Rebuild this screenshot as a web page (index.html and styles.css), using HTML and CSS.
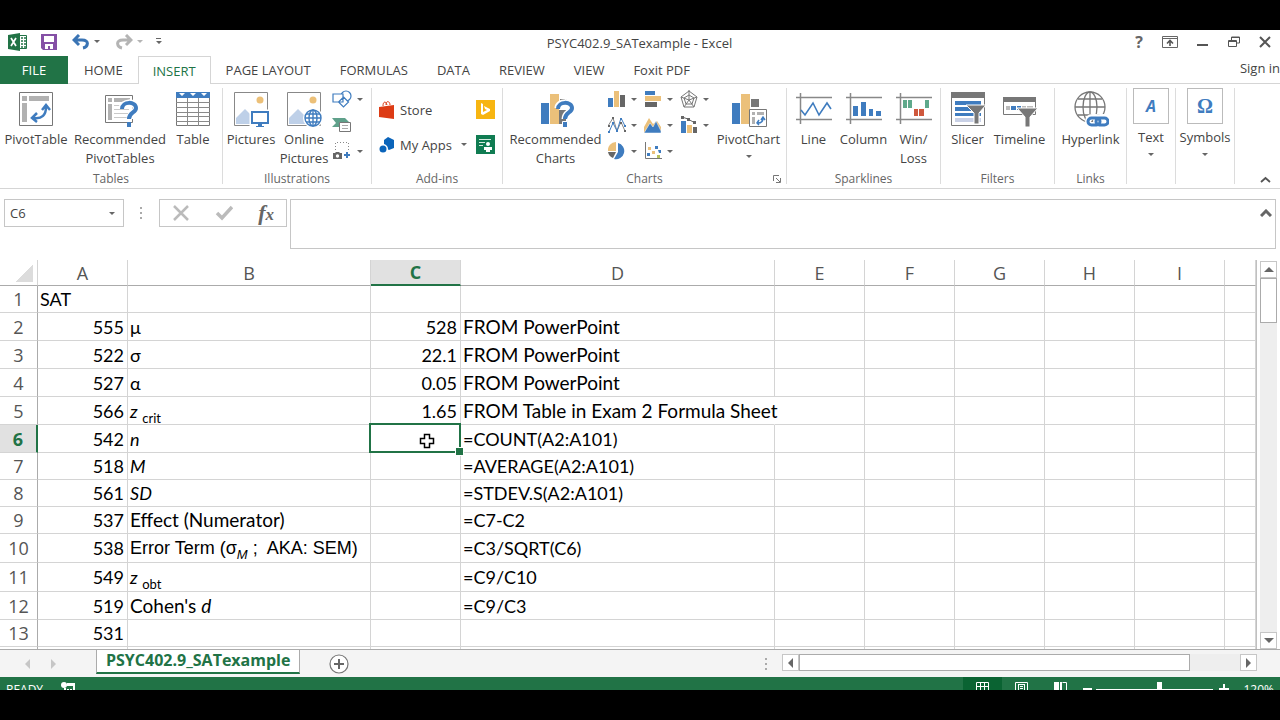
FILE: index.html
```html
<!DOCTYPE html>
<html lang="en">
<head>
    <meta charset="UTF-8">
    <meta name="viewport" content="width=device-width, initial-scale=1.0">
    <title>PSYC402.9_SATexample - Excel</title>
    <link rel="stylesheet" href="styles.css">
</head>
<body>
<div class="app">

    <!-- Title bar -->
    <header class="titlebar">
        <div class="quick">
            <svg class="logo" width="20" height="18" viewBox="0 0 20 18"><path fill="#217346" d="M0 2 12 0v18L0 16z"/><path fill="#fff" stroke="#217346" d="M12 2.500h6.500v13H12"/><path stroke="#217346" stroke-width="1.500" d="M13 5h2m1 0h2m-5 3h2m1 0h2m-5 3h2m1 0h2m-5 3h2m1 0h2"/><path stroke="#fff" stroke-width="1.700" d="m3 5 5 8m0-8-5 8"/></svg>
            <button aria-label="Save"><svg width="16" height="16" viewBox="0 0 16 16"><path fill="#8550a6" d="M0 0h16v16H2l-2-2z"/><path fill="#fff" d="M3 2h10v6H3zM4 10h8v5H9v-3H7v3H4z"/></svg></button>
            <button aria-label="Undo" class="undo"><svg width="18" height="16" viewBox="0 0 18 16"><path fill="none" stroke="#3a74b4" stroke-width="3" d="M3 6h7c8 0 6 7 1 8M7 1 2 6l5 5"/></svg><i class="caret"></i></button>
            <button aria-label="Redo" class="redo"><svg width="18" height="16" viewBox="0 0 18 16"><path fill="none" stroke="#b4b4b4" stroke-width="3" d="M15 6H8C0 6 2 13 7 14M11 1l5 5-5 5"/></svg><i class="caret"></i></button>
            <button aria-label="Customize Quick Access Toolbar" class="customize"><svg width="6" height="7" viewBox="0 0 6 7"><path fill="#666" d="M0 0h5v1H0zM0 3h6L3 6z"/></svg></button>
        </div>
        <div class="doc-title">PSYC402.9_SATexample - Excel</div>
        <div class="window-buttons">
            <button aria-label="Help" class="help">?</button>
            <button aria-label="Ribbon Display Options"><svg width="16" height="12" viewBox="0 0 16 12"><path fill="none" stroke="#666" d="M.5.5h15v11H.5zM0 2.500h16"/><path fill="none" stroke="#555" stroke-width="1.600" d="M8 10V5M5 7.500l3-3 3 3"/></svg></button>
            <button aria-label="Minimize"><svg width="12" height="12" viewBox="0 0 12 12"><path fill="#555" d="M0 8h11v2H0z"/></svg></button>
            <button aria-label="Restore"><svg width="12" height="12" viewBox="0 0 12 12"><path fill="none" stroke="#555" d="M3.500 4V1h8v6H9M.5 4.500h8v6h-8z"/><path stroke="#555" d="M3 1.500h9M0 5.500h9"/></svg></button>
            <button aria-label="Close"><svg width="12" height="12" viewBox="0 0 12 12"><path stroke="#555" stroke-width="2" d="m1 1 10 10M11 1 1 11"/></svg></button>
        </div>
    </header>

    <!-- Ribbon tabs -->
    <nav class="tabs">
        <button class="tab file">FILE</button>
        <button class="tab">HOME</button>
        <button class="tab active">INSERT</button>
        <button class="tab">PAGE LAYOUT</button>
        <button class="tab">FORMULAS</button>
        <button class="tab">DATA</button>
        <button class="tab">REVIEW</button>
        <button class="tab">VIEW</button>
        <button class="tab">Foxit PDF</button>
        <a class="sign-in" href="#">Sign in</a>
    </nav>

    <!-- Ribbon -->
    <div class="ribbon">
        <section class="group tables">
            <div class="tools">
                <button class="big w72"><svg width="36" height="36" viewBox="0 0 36 36"><path fill="#fff" stroke="#777" d="M1.500 1.500h33v33h-33z"/><path fill="#b1b1b1" d="M4 5h5v5H4zm7 0h20v5H11zM4 12h5v19H4z"/><path fill="none" stroke="#3f7cbf" stroke-width="2.500" d="M16 27c8 1 12-3 12-11M24 19l4-5 4 5M19 22l-5 5 5 4"/></svg>PivotTable</button>
                <button class="big w96"><svg width="36" height="36" viewBox="0 0 36 36"><path fill="#fff" stroke="#777" d="M3.500 4.500h27v27h-27z"/><path fill="#b1b1b1" d="M6 7h4v4H6zm6 0h16v4H12zM6 13h4v16H6z"/><path stroke="#c9c9c9" d="M12 14.500h15m-15 4h15m-15 4h15m-15 4h15"/><path fill="none" stroke="#fff" stroke-width="7" d="M20 18c0-8 14-8 14-1 0 5-6 4-6 11"/><path fill="none" stroke="#3f7cbf" stroke-width="4" d="M20 18c0-8 14-8 14-1 0 5-7 4-7 11"/><path fill="#3f7cbf" d="M25 31h4v5h-4z"/></svg>Recommended<br>PivotTables</button>
                <button class="big w50"><svg width="36" height="36" viewBox="0 0 36 36"><path fill="#fff" stroke="#777" d="M1.500 1.500h33v33h-33z"/><path fill="#3f7cbf" d="M1 1h34v6H1z"/><path stroke="#8a8a8a" d="M1 11.500h34m-34 5h34m-34 5h34m-34 4h34m-34 5h34M12.500 7v28m11-28v28"/><path fill="#fff" d="M4 2h6L7 5zm11 0h6l-3 3zm11 0h6l-3 3z"/></svg>Table</button>
            </div>
            <h2>Tables</h2>
        </section>
        <section class="group illustrations">
            <div class="tools">
                <button class="big w56"><svg width="36" height="36" viewBox="0 0 36 36"><path fill="#fff" stroke="#888" d="M1.500 1.500h33v33h-33z"/><circle cx="27" cy="9" r="3.500" fill="#ecc078"/><path fill="#bed0e8" d="M3 33V27l9-9 9 9v6z"/><path fill="#fff" stroke="#fff" stroke-width="5" d="M19 21h17v14H19z"/><path fill="#fff" stroke="#3f7cbf" stroke-width="2" d="M19 21h16v11H19z"/><path fill="#3f7cbf" d="M25 33h4v2h-4zm-2 2h8v1h-8z"/></svg>Pictures</button>
                <button class="big w50"><svg width="36" height="36" viewBox="0 0 36 36"><path fill="#fff" stroke="#888" d="M1.500 1.500h33v33h-33z"/><circle cx="27" cy="9" r="3.500" fill="#ecc078"/><path fill="#bed0e8" d="M3 33V27l9-9 9 9v6z"/><g fill="#fff" stroke="#3f7cbf" stroke-width="1.400"><circle cx="27" cy="27" r="8" stroke="#fff" stroke-width="4"/><circle cx="27" cy="27" r="8"/><ellipse cx="27" cy="27" rx="4" ry="8"/><path d="M19 27h16M27 19v16M20 23h14M20 31h14"/></g></svg>Online<br>Pictures</button>
                <div class="small-grid one">
                    <button aria-label="Shapes"><svg width="20" height="18" viewBox="0 0 20 18"><g fill="#fff" stroke="#3f7cbf" stroke-width="1.200"><circle cx="14" cy="6" r="5"/><path d="M1 4h10v8H1zM11.500 7l5 5-5 5-5-5z"/></g></svg><i class="caret"></i></button>
                    <button aria-label="SmartArt"><svg width="20" height="18" viewBox="0 0 20 18"><path fill="#5fa08a" d="M0 2h13l4 4-2 2H7v3H0l4-4z"/><path fill="#fff" stroke="#777" d="M7.500 6.500h11v9h-11z"/><path stroke="#aaa" d="M10 9.500h6m-6 3h6"/></svg></button>
                    <button aria-label="Screenshot"><svg width="20" height="18" viewBox="0 0 20 18"><path fill="none" stroke="#888" stroke-dasharray="1 2" d="M3.500 8V.5h13V9"/><path fill="#666" d="M1 11h2l1-1h3l1 1h2v6H1z"/><circle cx="5.500" cy="14" r="1.700" fill="#fff"/><path stroke="#3f7cbf" stroke-width="2" d="M12 13h6m-3-3v6"/></svg><i class="caret"></i></button>
                </div>
            </div>
            <h2>Illustrations</h2>
        </section>
        <section class="group addins">
            <div class="tools">
                <div class="apps">
                    <button><svg width="16" height="18" viewBox="0 0 16 18"><path fill="#dd3b14" d="M0 6l15-2v14L0 16z"/><path fill="none" stroke="#dd3b14" d="M4 5c0-5 3-5 4-1m-1 0c0-5 4-4 4 0"/></svg>Store</button>
                    <button><svg width="16" height="18" viewBox="0 0 16 18"><path fill="#0a64ba" d="m9 1 6 3v8l-5 2-5-3V4z"/><circle cx="4" cy="13" r="5" fill="#fff"/><circle cx="4" cy="13" r="3.500" fill="#0a64ba"/></svg>My Apps<i class="caret"></i></button>
                </div>
                <div class="apps side">
                    <button aria-label="Bing Maps"><svg width="19" height="19" viewBox="0 0 19 19"><path fill="#f7b511" d="M0 0h19v19H0z"/><path fill="#fff" d="m5 3 2 1v8l4-2-2-1-1-3 6 3v2l-7 4-2-1z"/></svg></button>
                    <button aria-label="People Graph"><svg width="19" height="19" viewBox="0 0 19 19"><path fill="#107c52" d="M0 0h19v19H0z"/><path stroke="#d5eadf" d="M3 4.500h12M3 7.500h6m-6 3h4"/><circle cx="12" cy="9" r="2" fill="#fff"/><path fill="#fff" d="M8 12h8v3h-2v2h-4v-2H8z"/></svg></button>
                </div>
            </div>
            <h2>Add-ins</h2>
        </section>
        <section class="group charts">
            <div class="tools">
                <button class="big w100"><svg width="36" height="36" viewBox="0 0 36 36"><path fill="#3f7cbf" d="M3 12h8v21H3z"/><path fill="#ebc07a" d="M12 3h9v30h-9z"/><path fill="#777" d="M22 8h7v2h-7zM21 19h7v14h-7z"/><path fill="none" stroke="#fff" stroke-width="7" d="M20 17c0-7 14-7 14-1 0 6-7 5-7 12"/><path fill="none" stroke="#3f7cbf" stroke-width="4" d="M20 18c0-8 14-8 14-1 0 5-7 4-7 11"/><path fill="#3f7cbf" stroke="#fff" d="M24.500 30.500h5v6h-5z"/></svg>Recommended<br>Charts</button>
                <div class="small-grid">
                    <button aria-label="Column chart"><svg width="18" height="18" viewBox="0 0 18 18"><path fill="#3f7cbf" d="M0 8h5v9H0z"/><path fill="#ebc07a" d="M6 1h5v16H6z"/><path fill="#666" d="M12 5h5v12h-5z"/></svg><i class="caret"></i></button>
                    <button aria-label="Bar chart"><svg width="18" height="18" viewBox="0 0 18 18"><path fill="#3f7cbf" d="M1 1h10v4H1z"/><path fill="#ebc07a" d="M1 6h16v5H1z"/><path fill="#666" d="M1 12h12v5H1z"/></svg><i class="caret"></i></button>
                    <button aria-label="Radar chart"><svg width="18" height="18" viewBox="0 0 18 18"><path fill="none" stroke="#777" d="m9 1 8 6-3 10H4L1 7zM9 5l5 3-2 6H6L4 8zM9 0v10L1 7m8 3 8-3m-8 3-5 7m5-7 5 7"/></svg><i class="caret"></i></button>
                    <button aria-label="Line chart"><svg width="18" height="18" viewBox="0 0 18 18"><path fill="none" stroke="#888" d="m0 10 5-8 4 13 4-9 4 9"/><path fill="none" stroke="#3f7cbf" d="m1 16 4-9 4 8 4-13 4 8"/><path fill="#3f7cbf" d="M0 15h2v2H0zM4 6h2v2H4zm4 8h2v2H8zm4-12h2v2h-2zm4 7h2v2h-2z"/><path fill="#666" d="M0 9h2v2H0zm4-8h2v2H4zm8 5h2v2h-2zm4 8h2v2h-2z"/></svg><i class="caret"></i></button>
                    <button aria-label="Area chart"><svg width="18" height="18" viewBox="0 0 18 18"><path fill="#ebc07a" d="m0 11 5-9 4 6 4-3 4 6v6H0z"/><path fill="#3f7cbf" stroke="#fff" stroke-width=".5" d="m0 17 6-10 3 4 3-6 5 10v2z"/></svg><i class="caret"></i></button>
                    <button aria-label="Combo chart"><svg width="18" height="18" viewBox="0 0 18 18"><path fill="#3f7cbf" d="M1 5h5v12H1z"/><path fill="#ebc07a" d="M7 9h5v8H7z"/><path fill="#666" d="M13 11h4v6h-4zM1 0h3v3H1zm6 2h3v3H7zm6 3h3v3h-3z"/><path fill="none" stroke="#666" d="m2 1 6 2 7 4"/></svg><i class="caret"></i></button>
                    <button aria-label="Pie chart"><svg width="18" height="18" viewBox="0 0 18 18"><path fill="#3f7cbf" d="M10 1a8 8 0 0 1-4 16l4-7z"/><path fill="#ebc07a" d="M8 0v9H0a8 8 0 0 1 8-9z"/><path fill="#666" d="M0 10h8l-3 6a8 8 0 0 1-5-6z"/></svg><i class="caret"></i></button>
                    <button aria-label="Scatter chart"><svg width="18" height="18" viewBox="0 0 18 18"><path fill="none" stroke="#777" d="M1.500 0v16.500H18"/><path fill="#3f7cbf" d="M11 4h3v3h-3zM3 11h3v3H3zm12 0-1-3h3v3z"/><path fill="#ebc07a" d="M4 5h3v3H4zm4 4h3v3H8z"/><path fill="#b6c05a" d="M13 13h3v3h-3z"/></svg><i class="caret"></i></button>
                </div>
                <button class="big w70"><svg width="36" height="36" viewBox="0 0 36 36"><path fill="#3f7cbf" d="M1 12h8v21H1z"/><path fill="#ebc07a" d="M10 3h9v30h-9z"/><path fill="#777" d="M20 8h8v8h-8z"/><path fill="#fff" stroke="#777" d="M18.500 18.500h17v17h-17z"/><path fill="#b1b1b1" d="M21 21h3v3h-3zm5 0h7v3h-7zM21 26h3v7h-3z"/><path fill="none" stroke="#3f7cbf" stroke-width="1.500" d="M27 32c3 0 5-1 5-5m-2 2 2-3 2 3m-6 0-2 3 2 2"/></svg>PivotChart<i class="caret"></i></button>
            </div>
            <h2>Charts</h2>
            <button class="launcher" aria-label="Chart options"><svg width="8" height="8" viewBox="0 0 8 8"><path fill="none" stroke="#777" d="M.5 6V.5H6M3 3l4 4M7.500 3v4.500H3"/></svg></button>
        </section>
        <section class="group sparklines">
            <div class="tools">
                <button class="big w50"><svg width="36" height="36" viewBox="0 0 36 36"><path stroke="#888" stroke-width="1.500" d="M0 6.500h36M0 28.500h36M4.500 2v31"/><path fill="none" stroke="#3f7cbf" stroke-width="1.600" d="m5 19 4 5 8-12 6 12 8-12 4 6"/></svg>Line</button>
                <button class="big w50"><svg width="36" height="36" viewBox="0 0 36 36"><path stroke="#888" stroke-width="1.500" d="M0 6.500h36M0 28.500h36M4.500 2v31"/><path fill="#3f7cbf" d="M7 15h5v10H7zm8-4h5v14h-5zm8 7h4v7h-4zm7 2h5v5h-5z"/></svg>Column</button>
                <button class="big w50"><svg width="36" height="36" viewBox="0 0 36 36"><path stroke="#888" stroke-width="1.500" d="M0 6.500h36M0 28.500h36M4.500 2v31"/><path fill="#5fa98b" d="M7 9h4v8H7zm5 0h4v8h-4zm17 0h4v8h-4z"/><path fill="#cf583d" d="M18 18h4v7h-4zm5 0h5v7h-5z"/></svg>Win/<br>Loss</button>
            </div>
            <h2>Sparklines</h2>
        </section>
        <section class="group filters">
            <div class="tools">
                <button class="big w44"><svg width="36" height="36" viewBox="0 0 36 36"><path fill="#fff" stroke="#777" d="M1.500 1.500h33v33h-33z"/><path fill="#777" d="M1 1h34v6H1z"/><path fill="#3f7cbf" d="M5 10h26v4H5zm0 6h26v4H5zm0 6h26v3H5z"/><path fill="#c9d1e6" d="M5 27h26v4H5z"/><path fill="#777" stroke="#fff" d="M16 14h20l-7 8v11h-5V22z"/></svg>Slicer</button>
                <button class="big w60"><svg width="36" height="36" viewBox="0 0 36 36"><path fill="#fff" stroke="#777" d="M1.500 6.500h32v17h-32z"/><path fill="#777" d="M1 6h33v5H1z"/><path fill="#bbb" d="M4 15h4v4H4zm16 0h4v4h-4zm5 0h6v4h-6z"/><path fill="#3f7cbf" d="M9 15h5v4H9zm6 0h4v4h-4z"/><path fill="#777" stroke="#fff" d="M15 17h21l-8 9v10h-5V26z"/></svg>Timeline</button>
            </div>
            <h2>Filters</h2>
        </section>
        <section class="group links">
            <div class="tools">
                <button class="big w70"><svg width="36" height="36" viewBox="0 0 36 36"><g fill="none" stroke="#777" stroke-width="1.300"><circle cx="17" cy="16" r="15"/><ellipse cx="17" cy="16" rx="7" ry="15"/><path d="M2 16h30M17 1v30M5 8h24M5 24h24"/></g><g fill="none"><rect x="15" y="26" width="12" height="8" rx="4" stroke="#fff" stroke-width="6"/><rect x="23" y="26" width="12" height="8" rx="4" stroke="#fff" stroke-width="6"/><rect x="15" y="27" width="12" height="7" rx="3.500" stroke="#3f7cbf" stroke-width="3"/><rect x="23" y="27" width="12" height="7" rx="3.500" stroke="#3f7cbf" stroke-width="3"/></g></svg>Hyperlink</button>
            </div>
            <h2>Links</h2>
        </section>
        <section class="group text">
            <div class="tools">
                <button class="big boxed w44"><span class="box letter">A</span>Text<i class="caret"></i></button>
            </div>
        </section>
        <section class="group symbols">
            <div class="tools">
                <button class="big boxed w56"><span class="box omega">Ω</span>Symbols<i class="caret"></i></button>
            </div>
        </section>
        <button class="collapse" aria-label="Collapse the Ribbon"><svg width="11" height="7" viewBox="0 0 11 7"><path fill="none" stroke="#555" stroke-width="1.800" d="m1 6 4.500-4L10 6"/></svg></button>
    </div>

    <!-- Formula bar -->
    <div class="formula-bar">
        <div class="name-box">
            <input type="text" value="C6" aria-label="Name Box">
            <i class="caret"></i>
        </div>
        <i class="dots"></i>
        <div class="formula-buttons">
            <button aria-label="Cancel"><svg width="18" height="16" viewBox="0 0 18 16"><path stroke="#bbb" stroke-width="2.500" d="m2 1 14 14M16 1 2 15"/></svg></button>
            <button aria-label="Enter"><svg width="18" height="16" viewBox="0 0 18 16"><path fill="none" stroke="#bbb" stroke-width="3.500" d="m2 8 5 5L17 2"/></svg></button>
            <button aria-label="Insert Function" class="fx"><span>f</span>x</button>
        </div>
        <div class="formula-input">
            <input type="text" aria-label="Formula">
            <svg width="12" height="8" viewBox="0 0 12 8"><path fill="none" stroke="#666" stroke-width="3" d="m1 7 5-5 5 5"/></svg>
        </div>
    </div>

    <!-- Worksheet -->
    <div class="sheet">
        <div class="grid">
            <table>
                <colgroup>
                    <col class="col-num"><col class="col-std"><col class="col-b"><col class="col-c"><col class="col-d">
                    <col class="col-std"><col class="col-std"><col class="col-std"><col class="col-std"><col class="col-std"><col>
                </colgroup>
                <thead>
                    <tr><th class="corner"></th><th>A</th><th>B</th><th class="current">C</th><th>D</th><th>E</th><th>F</th><th>G</th><th>H</th><th>I</th><th></th></tr>
                </thead>
                <tbody>
                    <tr class="short"><th>1</th><td>SAT</td><td></td><td></td><td></td><td></td><td></td><td></td><td></td><td></td><td></td></tr>
                    <tr><th>2</th><td class="num">555</td><td>μ</td><td class="num">528</td><td class="words">FROM PowerPoint</td><td></td><td></td><td></td><td></td><td></td><td></td></tr>
                    <tr><th>3</th><td class="num">522</td><td>σ</td><td class="num">22.1</td><td class="words">FROM PowerPoint</td><td></td><td></td><td></td><td></td><td></td><td></td></tr>
                    <tr><th>4</th><td class="num">527</td><td>α</td><td class="num">0.05</td><td class="words">FROM PowerPoint</td><td></td><td></td><td></td><td></td><td></td><td></td></tr>
                    <tr><th>5</th><td class="num">566</td><td><em>z</em> <sub>crit</sub></td><td class="num">1.65</td><td class="words spill">FROM Table in Exam 2 Formula Sheet</td><td></td><td></td><td></td><td></td><td></td><td></td></tr>
                    <tr><th class="current">6</th><td class="num">542</td><td><em>n</em></td><td class="selected"><svg class="cursor" width="16" height="16" viewBox="0 0 16 16"><path fill="#fff" stroke="#000" stroke-width="1.500" d="M5.500 1.500h5v4h4v5h-4v4h-5v-4h-4v-5h4z"/></svg></td><td>=COUNT(A2:A101)</td><td></td><td></td><td></td><td></td><td></td><td></td></tr>
                    <tr class="short"><th>7</th><td class="num">518</td><td><em>M</em></td><td></td><td>=AVERAGE(A2:A101)</td><td></td><td></td><td></td><td></td><td></td><td></td></tr>
                    <tr class="short"><th>8</th><td class="num">561</td><td><em>SD</em></td><td></td><td>=STDEV.S(A2:A101)</td><td></td><td></td><td></td><td></td><td></td><td></td></tr>
                    <tr class="short"><th>9</th><td class="num">537</td><td class="words">Effect (Numerator)</td><td></td><td>=C7-C2</td><td></td><td></td><td></td><td></td><td></td><td></td></tr>
                    <tr class="tall"><th>10</th><td class="num">538</td><td class="arial">Error Term (σ<sub><em>M</em></sub> ;&nbsp; AKA: SEM)</td><td></td><td>=C3/SQRT(C6)</td><td></td><td></td><td></td><td></td><td></td><td></td></tr>
                    <tr class="tall"><th>11</th><td class="num">549</td><td><em>z</em> <sub>obt</sub></td><td></td><td>=C9/C10</td><td></td><td></td><td></td><td></td><td></td><td></td></tr>
                    <tr><th>12</th><td class="num">519</td><td class="words">Cohen's <em>d</em></td><td></td><td>=C9/C3</td><td></td><td></td><td></td><td></td><td></td><td></td></tr>
                    <tr class="short"><th>13</th><td class="num">531</td><td></td><td></td><td></td><td></td><td></td><td></td><td></td><td></td><td></td></tr>
                    <tr><th></th><td></td><td></td><td></td><td></td><td></td><td></td><td></td><td></td><td></td><td></td></tr>
                </tbody>
            </table>
        </div>
        <div class="vscroll">
            <button aria-label="Scroll up"><i class="tri up"></i></button>
            <div class="thumb"></div>
            <button aria-label="Scroll down" class="end"><i class="tri down"></i></button>
        </div>
    </div>

    <!-- Sheet tabs -->
    <div class="sheet-tabs">
        <div class="sheet-nav">
            <button aria-label="Previous sheet"><i class="tri left"></i></button>
            <button aria-label="Next sheet"><i class="tri right"></i></button>
        </div>
        <button class="sheet-tab">PSYC402.9_SATexample</button>
        <button class="add-sheet" aria-label="New sheet"><svg width="20" height="20" viewBox="0 0 20 20"><circle cx="10" cy="10" r="9" fill="#fff" stroke="#777" stroke-width="1.200"/><path stroke="#666" stroke-width="2" d="M5 10h10M10 5v10"/></svg></button>
        <i class="dots"></i>
        <div class="hscroll">
            <button aria-label="Scroll left"><i class="tri left"></i></button>
            <div class="thumb"></div>
            <button aria-label="Scroll right" class="end"><i class="tri right"></i></button>
        </div>
    </div>

    <!-- Status bar -->
    <footer class="status">
        <span>READY</span>
        <button class="macro" aria-label="Record macro"><svg width="14" height="12" viewBox="0 0 14 12"><path fill="#fff" d="M6 1h8v3H6zM3 6h2v6H3zm3 1h2v1H6zm3 0h2v1H9zm3-3h2v8h-2z"/><circle cx="3" cy="3" r="3" fill="#fff"/></svg></button>
        <div class="views">
            <button class="on" aria-label="Normal"><svg width="13" height="12" viewBox="0 0 13 12"><path fill="none" stroke="#fff" d="M.5.5h12v11H.5zM0 4.500h13M0 8.500h13M4.500 0v12m4-12v12"/></svg></button>
            <button aria-label="Page Layout"><svg width="13" height="12" viewBox="0 0 13 12"><path fill="none" stroke="#fff" d="M.5.5h12v11H.5zM3.500 3v9m6-9v9M3 2.500h7M5 4.500h3m-3 2h3"/></svg></button>
            <button aria-label="Page Break Preview"><svg width="13" height="12" viewBox="0 0 13 12"><path fill="#fff" d="M0 0h5v12H0zm6 0h2v12H6z"/><path fill="none" stroke="#fff" d="M8.500.5h4V12"/></svg></button>
        </div>
        <button class="zoom-step" aria-label="Zoom out"><svg width="10" height="10" viewBox="0 0 10 10"><path stroke="#fff" stroke-width="2" d="M0 5h9"/></svg></button>
        <input type="range" min="0" max="100" value="54" aria-label="Zoom">
        <button class="zoom-step" aria-label="Zoom in"><svg width="10" height="10" viewBox="0 0 10 10"><path stroke="#fff" stroke-width="2" d="M0 5h10M5 0v10"/></svg></button>
        <span class="percent">120%</span>
    </footer>
</div>
</body>
</html>
```
FILE: styles.css
```css
/* General Styles */
* {
    box-sizing: border-box;
}

body {
    margin: 0;
    background: #000;
    color: #444;
    font-family: "Open Sans", "Noto Sans", sans-serif;
    font-size: 13px;
    overflow: hidden;
}

button,
input {
    margin: 0;
    padding: 0;
    border: 0;
    background: none;
    color: inherit;
    font: inherit;
}

svg {
    display: block;
    flex: none;
}

.app {
    display: flex;
    flex-direction: column;
    height: calc(100vh - 60px);
    margin: 30px 0;
    background: #fff;
    overflow: hidden;
}

.caret {
    flex: none;
    border: 3px solid transparent;
    border-top-color: #666;
    border-bottom: 0;
}

.dots {
    flex: none;
    width: 2px;
    height: 12px;
    background: repeating-linear-gradient(#aaa 0 2px, transparent 2px 5px);
}

.tri {
    display: block;
    border: 5px solid transparent;
}

.tri.up {
    border-top: 0;
    border-bottom-color: #666;
}

.tri.down {
    border-bottom: 0;
    border-top-color: #666;
}

.tri.left {
    border-left: 0;
    border-right-color: #666;
}

.tri.right {
    border-right: 0;
    border-left-color: #666;
}

/* Title bar */
.titlebar {
    display: flex;
    flex: none;
    align-items: center;
    justify-content: space-between;
    height: 26px;
    padding: 0 9px 3px 8px;
}

.quick,
.window-buttons {
    display: flex;
    flex: 1;
    align-items: center;
}

.quick button {
    display: flex;
    align-items: center;
    gap: 4px;
    margin-left: 13px;
}

.quick .undo,
.quick .redo {
    margin-left: 15px;
}

.redo .caret {
    border-top-color: #b4b4b4;
}

.doc-title {
    padding-top: 3px;
    font-size: 13px;
}

.window-buttons {
    justify-content: flex-end;
    gap: 19px;
}

.help {
    font-size: 16px;
    font-weight: bold;
    line-height: 20px;
    color: #666;
}

/* Ribbon tabs */
.tabs {
    display: flex;
    flex: none;
    gap: 1px;
    height: 28px;
    border-bottom: 1px solid #d5d5d5;
    font-size: 13px;
}

.tab {
    height: 28px;
    padding: 0 14px;
    white-space: nowrap;
}

.tab.file {
    width: 68px;
    margin-right: 1px;
    background: #217346;
    color: #fff;
}

.tab.active {
    border: 1px solid #d5d5d5;
    border-bottom: 0;
    background: #fff;
    color: #217346;
}

.sign-in {
    margin-left: auto;
    padding-top: 3px;
    color: #444;
    text-decoration: none;
}

/* Ribbon */
.ribbon {
    display: flex;
    flex: none;
    height: 105px;
    border-bottom: 1px solid #d5d5d5;
}

.group {
    position: relative;
    display: flex;
    flex: none;
    flex-direction: column;
    align-items: center;
    justify-content: space-between;
    margin: 4px 0;
    border-right: 1px solid #dcdcdc;
}

.tables { width: 223px; }
.illustrations { width: 149px; }
.addins { width: 131px; }
.charts { width: 284px; }
.sparklines { width: 154px; }
.filters { width: 114px; }
.links { width: 72px; }
.text { width: 49px; }
.symbols { width: 59px; }

.group h2 {
    margin: 0;
    font-size: 12px;
    font-weight: normal;
    line-height: 10px;
    color: #666;
}

.tools {
    display: flex;
    align-items: flex-start;
}

.tables .tools,
.illustrations .tools {
    align-self: flex-start;
}

.big {
    display: flex;
    flex-direction: column;
    align-items: center;
    padding-top: 3px;
    font-size: 13px;
    line-height: 19px;
    white-space: nowrap;
    text-align: center;
}

.big svg {
    margin-bottom: 3px;
}

.big .caret {
    margin-top: 6px;
}

.w44 { width: 44px; }
.w50 { width: 50px; }
.w56 { width: 56px; }
.w60 { width: 60px; }
.w70 { width: 70px; }
.w72 { width: 72px; }
.w96 { width: 96px; }
.w100 { width: 100px; }

.boxed {
    padding-top: 0;
}

.box {
    width: 36px;
    height: 36px;
    margin-bottom: 4px;
    border: 1px solid #bbb;
    color: #3f7cbf;
    font-weight: bold;
    line-height: 34px;
}

.letter {
    font-size: 16px;
    font-style: italic;
}

.omega {
    font-family: "Liberation Serif", serif;
    font-size: 20px;
}

.small-grid {
    display: grid;
    grid-template-columns: repeat(3, 36px);
    grid-auto-rows: 26px;
}

.small-grid.one {
    grid-template-columns: 36px;
    padding-left: 1px;
}

.small-grid button {
    display: flex;
    align-items: center;
    gap: 5px;
    height: 22px;
    padding-left: 2px;
}

.apps {
    display: flex;
    flex-direction: column;
    padding-top: 4px;
    font-size: 13px;
}

.apps button {
    display: flex;
    align-items: center;
    gap: 5px;
    height: 35px;
    white-space: nowrap;
}

.apps .caret {
    margin-left: 4px;
}

.apps.side {
    padding-left: 9px;
}

.launcher {
    position: absolute;
    right: 5px;
    bottom: 1px;
}

.collapse {
    align-self: flex-end;
    margin: 0 9px 5px auto;
}

/* Formula bar */
.formula-bar {
    display: flex;
    flex: none;
    align-items: flex-start;
    height: 71px;
    padding: 10px 4px 0;
}

.name-box,
.formula-buttons,
.formula-input {
    display: flex;
    align-items: center;
    height: 28px;
    border: 1px solid #c6c6c6;
}

.name-box {
    width: 120px;
    padding: 0 8px 0 5px;
}

.name-box input {
    flex: 1;
    min-width: 0;
    font-size: 13px;
}

.formula-bar .dots {
    margin: 8px 17px 0 16px;
}

.formula-buttons {
    justify-content: space-between;
    width: 128px;
    padding: 0 12px;
}

.fx {
    font: italic bold 17px "Liberation Serif", serif;
    color: #666;
}

.fx span {
    font-size: 22px;
}

.formula-input {
    flex: 1;
    align-items: flex-start;
    height: 50px;
    margin-left: 3px;
    padding: 9px 3px;
}

.formula-input input {
    flex: 1;
}

/* Worksheet */
.sheet {
    display: flex;
    flex: 1;
    min-height: 0;
    border-bottom: 1px solid #ababab;
}

.grid {
    flex: 1;
    min-width: 0;
    border-right: 1px solid #c0c0c0;
    overflow: hidden;
}

table {
    width: 100%;
    table-layout: fixed;
    border-collapse: separate;
    border-spacing: 0;
    color: #000;
    font-family: Lato, sans-serif;
    font-size: 18px;
    line-height: 24px;
}

.col-num { width: 38px; }
.col-std { width: 90px; }
.col-b { width: 243px; }
.col-c { width: 90px; }
.col-d { width: 314px; }

th,
td {
    height: 28px;
    padding: 0 3px 0 2px;
    border-right: 1px solid #d4d4d4;
    border-bottom: 1px solid #d4d4d4;
    text-align: left;
    white-space: nowrap;
}

th {
    padding: 0;
    color: #555;
    font-family: "Open Sans", sans-serif;
    font-weight: normal;
    text-align: center;
}

thead th {
    height: 26px;
    border-bottom-color: #ababab;
}

tbody th {
    border-right-color: #ababab;
}

th.current {
    background: #e1e1e1;
    color: #217346;
}

thead th.current {
    border-bottom: 2px solid #217346;
    font-weight: bold;
}

tbody th.current {
    border-right: 2px solid #217346;
    font-weight: bold;
}

.corner {
    background: linear-gradient(135deg, transparent 50%, #dcdcdc 50%) 15px 4px / 18px 18px no-repeat;
}

.short th,
.short td {
    height: 27px;
}

.tall th,
.tall td {
    height: 29px;
}

.num {
    text-align: right;
}

.words {
    font-size: 19px;
}

.spill {
    border-right-color: transparent;
}

.arial {
    font-family: "Liberation Sans", sans-serif;
}

sub {
    font-size: 13px;
    line-height: 1px;
}

.selected {
    position: relative;
}

.selected::before {
    content: "";
    position: absolute;
    inset: -2px -1px -1px -2px;
    border: 2px solid #217346;
}

.selected::after {
    content: "";
    position: absolute;
    right: -4px;
    bottom: -4px;
    width: 7px;
    height: 7px;
    border: 1px solid #fff;
    background: #217346;
}

.cursor {
    position: absolute;
    top: 8px;
    left: 48px;
}

/* Scroll bars */
.vscroll,
.hscroll {
    display: flex;
    background: #eee;
}

.vscroll {
    flex-direction: column;
    width: 17px;
    margin: 1px 3px 0;
}

.vscroll button,
.hscroll button {
    display: grid;
    place-items: center;
    flex: none;
    width: 17px;
    height: 17px;
    border: 1px solid #c6c6c6;
    background: #fff;
}

.vscroll .thumb {
    height: 45px;
    border: 1px solid #ababab;
    background: #fff;
}

.vscroll .end {
    margin-top: auto;
}

.hscroll {
    width: 475px;
    height: 17px;
    margin: 4px 23px 0 15px;
}

.hscroll .thumb {
    flex: 0 0 391px;
    border: 1px solid #ababab;
    background: #fff;
}

.hscroll .end {
    margin-left: auto;
}

/* Sheet tabs */
.sheet-tabs {
    display: flex;
    flex: none;
    height: 27px;
    background: #f4f4f4;
}

.sheet-nav {
    display: flex;
    gap: 21px;
    width: 96px;
    padding-left: 25px;
}

.sheet-nav .left {
    border-right-color: #c6c6c6;
}

.sheet-nav .right {
    border-left-color: #c6c6c6;
}

.sheet-tab {
    height: 24px;
    padding: 0 9px 2px;
    border-right: 1px solid #ababab;
    border-bottom: 2px solid #217346;
    border-left: 1px solid #ababab;
    background: #fff;
    color: #217346;
    font-size: 16px;
    font-weight: bold;
    line-height: 20px;
}

.add-sheet {
    margin-left: 29px;
}

.sheet-tabs .dots {
    margin: 8px 0 0 auto;
}

/* Status bar */
.status {
    display: flex;
    flex: none;
    align-items: flex-start;
    height: 13px;
    padding: 5px 6px 0;
    background: #217346;
    color: #fff;
    font-size: 12px;
    line-height: 16px;
    overflow: hidden;
}

.macro {
    margin-left: 18px;
}

.views {
    display: flex;
    margin: -5px 3px 0 auto;
}

.views button {
    display: flex;
    justify-content: center;
    width: 39px;
    height: 24px;
    padding-top: 5px;
}

.views .on {
    background: #0a6332;
}

.zoom-step {
    padding-top: 2px;
}

.status input {
    width: 117px;
    height: 14px;
    margin: 0 6px 0 3px;
    background: linear-gradient(#fff, #fff) 0 7px / 100% 1px no-repeat;
    appearance: none;
}

.status input::-webkit-slider-thumb {
    width: 5px;
    height: 14px;
    background: #fff;
    appearance: none;
}

.percent {
    margin-left: 14px;
}
```
